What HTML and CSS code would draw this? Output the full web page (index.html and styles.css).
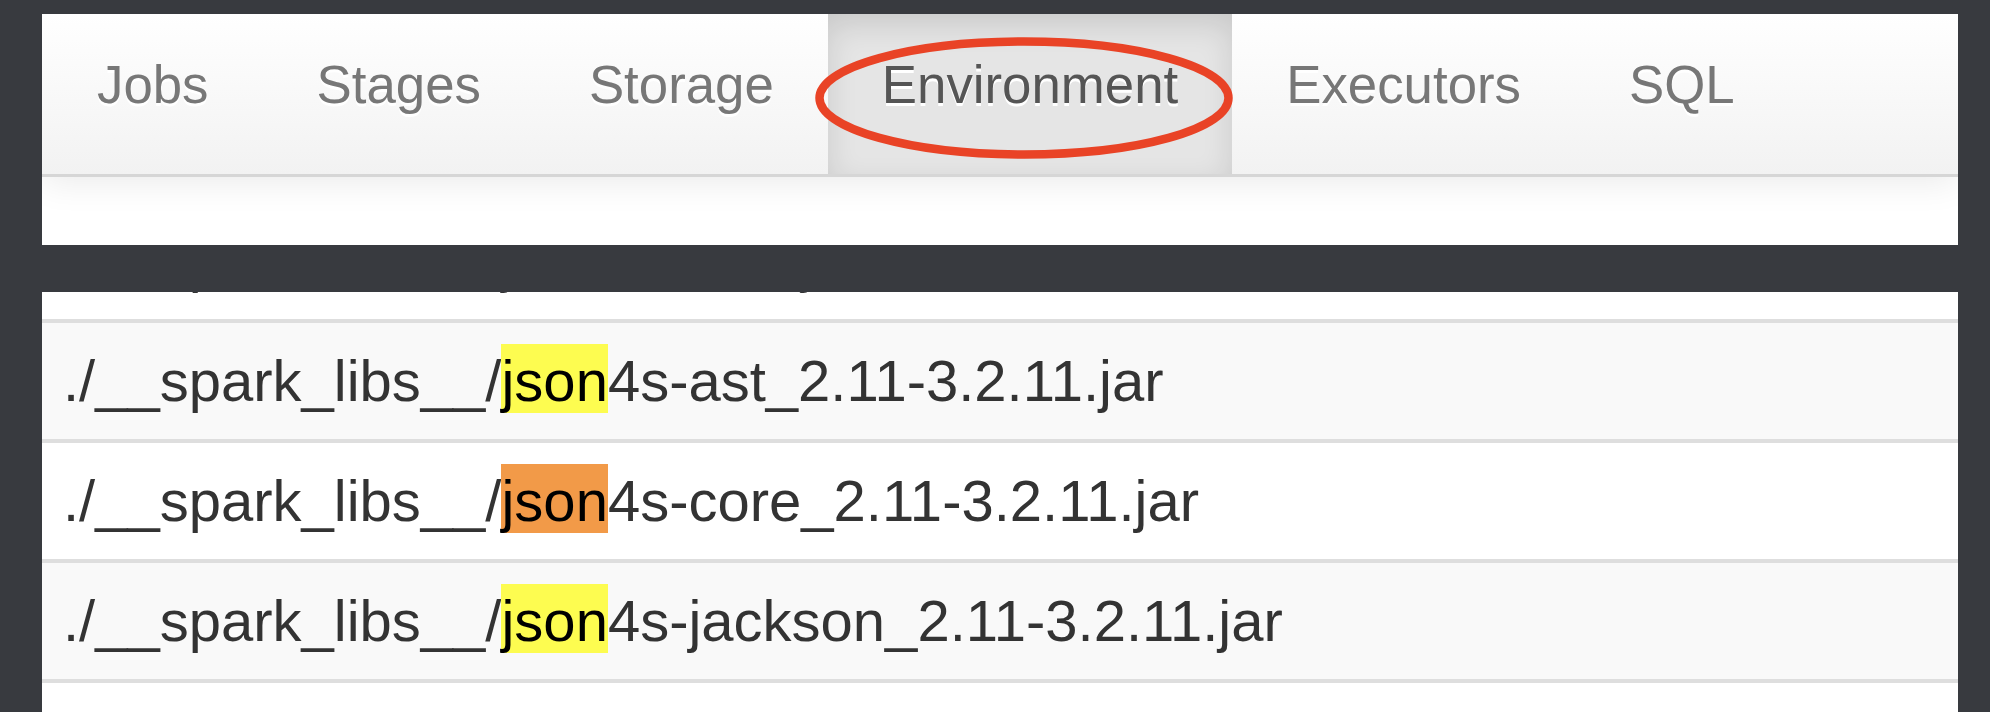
FILE: index.html
```html
<!DOCTYPE html>
<html lang="en">
<head>
<meta charset="utf-8">
<title>Spark UI - Environment</title>
<link rel="stylesheet" href="styles.css">
</head>
<body>
<div class="page">
  <section class="panel top-panel">
    <nav class="navbar">
      <ul class="nav">
        <li><a>Jobs</a></li>
        <li><a>Stages</a></li>
        <li><a>Storage</a></li>
        <li class="active"><a>Environment</a></li>
        <li><a>Executors</a></li>
        <li><a>SQL</a></li>
      </ul>
    </nav>
    <svg class="annotation" width="418" height="124" viewBox="0 0 418 124" aria-hidden="true">
      <ellipse cx="209" cy="61" rx="204.5" ry="56.5" fill="none" stroke="#e94326" stroke-width="8.5"/>
    </svg>
  </section>
  <section class="panel bottom-panel">
    <table class="classpath">
      <tbody>
        <tr><td>./__spark_libs__/jline-2.12.1.jar</td></tr>
        <tr class="striped"><td>./__spark_libs__/<mark class="hl">json</mark>4s-ast_2.11-3.2.11.jar</td></tr>
        <tr><td>./__spark_libs__/<mark class="hl current">json</mark>4s-core_2.11-3.2.11.jar</td></tr>
        <tr class="striped"><td>./__spark_libs__/<mark class="hl">json</mark>4s-jackson_2.11-3.2.11.jar</td></tr>
        <tr><td>./__spark_libs__/jsp-api-2.1.jar</td></tr>
      </tbody>
    </table>
  </section>
</div>
</body>
</html>
```

FILE: styles.css
```css
html, body {
  margin: 0;
  height: 100%;
  background: #383a3f;
  overflow: hidden;
}

.page {
  box-sizing: border-box;
  height: 100vh;
  padding: 14px 32px 0 42px;
  display: flex;
  flex-direction: column;
  gap: 47px;
}

.panel {
  background: #ffffff;
  overflow: hidden;
}

.top-panel {
  position: relative;
  height: 231px;
  flex: none;
}

.navbar {
  height: 160px;
  border-bottom: 3px solid #d6d6d6;
  background: linear-gradient(#ffffff, #f2f2f2);
  box-shadow: 0 4px 34px rgba(0, 0, 0, 0.09);
}

.nav {
  display: flex;
  height: 100%;
  margin: 0;
  padding: 0 0 0 1px;
  list-style: none;
}

.nav li {
  display: flex;
}

.nav a {
  display: block;
  padding: 33px 54px 0;
  line-height: 75px;
  font-family: "Liberation Sans", Arial, Helvetica, sans-serif;
  font-size: 52.8px;
  color: #777777;
  text-shadow: 0 3px 0 #ffffff;
}

.nav .active a {
  background: #e5e5e5;
  color: #555555;
  box-shadow: inset 0 11px 30px rgba(0, 0, 0, 0.12);
}

.annotation {
  position: absolute;
  left: 773px;
  top: 23px;
}

.bottom-panel {
  flex: 1;
}

.classpath {
  width: 100%;
  margin-top: -93px;
  border-collapse: collapse;
  font-family: "Liberation Sans", Arial, Helvetica, sans-serif;
  font-size: 58px;
  color: #333333;
  white-space: nowrap;
}

.classpath td {
  border-top: 4px solid #dedede;
  padding: 0 21px;
  line-height: 116px;
}

.classpath .striped td {
  background: #f9f9f9;
}

.hl {
  background: #fdfc50;
  color: #000000;
  padding-top: 4px;
}

.hl.current {
  background: #f29a48;
}
```
